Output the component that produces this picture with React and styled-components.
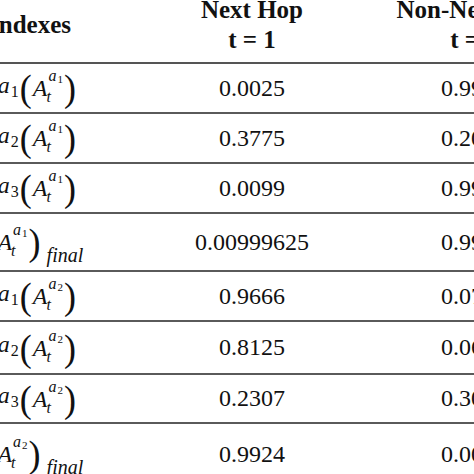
import React from "react";
import styled, { createGlobalStyle } from "styled-components";

const Global = createGlobalStyle`
  html, body {
    margin: 0;
    padding: 0;
    background: #ffffff;
    overflow: hidden;
  }
  body {
    width: 474px;
    height: 474px;
    font-family: "Liberation Serif", "Times New Roman", serif;
    color: #111111;
  }
`;

const Table = styled.div`
  width: 666px;
  margin-left: -81px;
  margin-top: -5px;
`;

const HeadRow = styled.div`
  display: grid;
  grid-template-columns: 222px 222px 222px;
  padding-bottom: 7px;
  border-bottom: 2px solid #555555;
`;

const HeadCell = styled.div`
  display: flex;
  flex-direction: column;
  align-items: center;
  justify-content: center;
  font-size: 25px;
  font-weight: bold;
  line-height: 30px;
  white-space: nowrap;
`;

const Row = styled.div`
  display: grid;
  grid-template-columns: 222px 222px 222px;
  height: ${(p) => p.$h}px;
  border-bottom: 2px solid #5a5a5a;
`;

const Cell = styled.div`
  display: flex;
  align-items: center;
  justify-content: center;
  font-size: 24px;
  white-space: nowrap;
`;

const Formula = styled.span`
  display: inline-flex;
  align-items: center;
  font-size: 24px;
  line-height: 24px;
`;

const Base = styled.span`
  display: inline-block;
  font-style: italic;
  line-height: 24px;
`;

const Idx = styled.span`
  font-style: normal;
  font-size: ${(p) => (p.$small ? 11 : 16)}px;
  vertical-align: ${(p) => (p.$small ? -2 : -4)}px;
  margin-left: 1px;
`;

const Paren = styled.span`
  font-size: 36px;
  line-height: 36px;
  margin: 0 1px;
  transform: scaleY(1.05);
`;

const Stack = styled.span`
  display: inline-flex;
  flex-direction: column;
  font-style: italic;
  font-size: 16px;
  line-height: 17px;
  margin-bottom: 4px;
  margin-left: 1px;
`;

const SupRow = styled.span`
  white-space: nowrap;
`;

const Low = styled.span`
  margin-left: -2px;
`;

const Lower = styled.span`
  font-style: italic;
  font-size: 20px;
  line-height: 20px;
  margin-top: 26px;
  margin-left: 5px;
  margin-right: 8px;
`;

const Expr = ({ n, agent, final }) => (
  <Formula>
    {final ? (
      <Base>P</Base>
    ) : (
      <Base>
        Pa<Idx>{n}</Idx>
      </Base>
    )}
    <Paren>(</Paren>
    <Base>A</Base>
    <Stack>
      <SupRow>
        a<Idx $small>{agent}</Idx>
      </SupRow>
      <Low>t</Low>
    </Stack>
    <Paren>)</Paren>
    {final && <Lower>final</Lower>}
  </Formula>
);

const rows = [
  { n: 1, agent: 1, next: "0.0025", non: "0.9975", h: 48 },
  { n: 2, agent: 1, next: "0.3775", non: "0.2063", h: 48 },
  { n: 3, agent: 1, next: "0.0099", non: "0.9901", h: 48 },
  { final: true, agent: 1, next: "0.00999625", non: "0.9900", h: 56 },
  { n: 1, agent: 2, next: "0.9666", non: "0.0734", h: 48 },
  { n: 2, agent: 2, next: "0.8125", non: "0.0625", h: 51 },
  { n: 3, agent: 2, next: "0.2307", non: "0.3093", h: 47 },
  { final: true, agent: 2, next: "0.9924", non: "0.0076", h: 60 },
];

export default function App() {
  return (
    <>
      <Global />
      <Table>
        <HeadRow>
          <HeadCell>Indexes</HeadCell>
          <HeadCell>
            <span>Next Hop</span>
            <span>t = 1</span>
          </HeadCell>
          <HeadCell>
            <span>Non-Next Hop</span>
            <span>t = 1</span>
          </HeadCell>
        </HeadRow>
        {rows.map((r, i) => (
          <Row key={i} $h={r.h}>
            <Cell>
              <Expr n={r.n} agent={r.agent} final={r.final} />
            </Cell>
            <Cell>{r.next}</Cell>
            <Cell>{r.non}</Cell>
          </Row>
        ))}
      </Table>
    </>
  );
}
